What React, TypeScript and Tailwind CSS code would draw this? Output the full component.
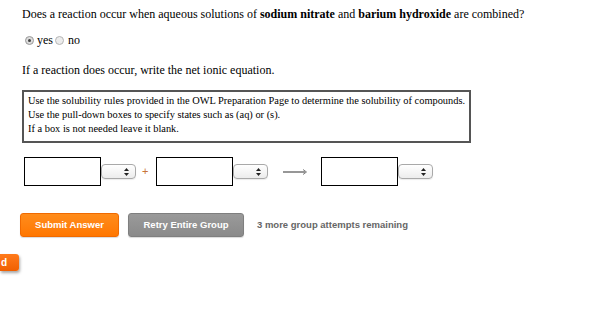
import React from "react";

function Sel() {
  return (
    <div className="relative w-[35px] h-[15px] rounded-[4px] border border-[#a9a9a9] bg-gradient-to-b from-white to-[#ececec] shadow-[0_1px_1px_rgba(0,0,0,0.08)]">
      <svg className="absolute right-[6px] top-[3px]" width="5" height="8" viewBox="0 0 5 8">
        <path d="M2.5 0 L5 3 L0 3 Z" fill="#222" />
        <path d="M0 5 L5 5 L2.5 8 Z" fill="#222" />
      </svg>
    </div>
  );
}

function Box() {
  return <div className="w-[77px] h-[29px] border border-black bg-white" />;
}

function Radio({ checked }: { checked?: boolean }) {
  return (
    <span
      className={
        "inline-flex items-center justify-center w-[9px] h-[9px] rounded-full border " +
        (checked ? "border-[#9a9a9a] bg-[#dcdcdc]" : "border-[#b5b5b5] bg-[#ececec]")
      }
    >
      {checked ? <span className="w-[3px] h-[3px] rounded-full bg-[#444]" /> : null}
    </span>
  );
}

export default function App() {
  return (
    <div className="w-[598px] h-[323px] bg-white overflow-hidden">
      <div className="pl-[22px] pt-[7px] font-['Liberation_Serif',serif] text-[12px] leading-[14px] text-black">
        <p>
          Does a reaction occur when aqueous solutions of <b>sodium nitrate</b> and{" "}
          <b>barium hydroxide</b> are combined?
        </p>
        <div className="mt-[12px] h-[14px] flex items-center pl-[3px]">
          <Radio checked />
          <span className="ml-[3px]">yes</span>
          <span className="ml-[2px] inline-flex">
            <Radio />
          </span>
          <span className="ml-[4px]">no</span>
        </div>
        <p className="mt-[16px]">If a reaction does occur, write the net ionic equation.</p>
        <div className="mt-[13px] w-[449px] h-[53px] border-2 border-[#555] pl-[4px] pt-[2px] text-[10.4px] leading-[14px]">
          <div>Use the solubility rules provided in the OWL Preparation Page to determine the solubility of compounds.</div>
          <div>Use the pull-down boxes to specify states such as (aq) or (s).</div>
          <div>If a box is not needed leave it blank.</div>
        </div>
        <div className="mt-[14px] ml-[2px] flex items-center">
          <Box />
          <Sel />
          <span className="ml-[6px] mr-[8px] text-[11px] leading-none text-[#c8743a] font-['Liberation_Sans',sans-serif]">+</span>
          <Box />
          <Sel />
          <svg className="ml-[15px] mr-[14px]" width="24" height="8" viewBox="0 0 24 8">
            <line x1="0" y1="4" x2="22" y2="4" stroke="#7d7d7d" strokeWidth="1.6" />
            <path d="M20 1.5 L23.5 4 L20 6.5" fill="none" stroke="#7d7d7d" strokeWidth="1" />
          </svg>
          <Box />
          <Sel />
        </div>
        <div className="mt-[27px] -ml-[2px] flex items-center font-['Liberation_Sans',sans-serif] font-bold text-[9.5px]">
          <div className="w-[99px] h-[24px] flex items-center justify-center rounded-[3px] border border-[#f06a00] bg-gradient-to-b from-[#ff8c1a] to-[#ff7700] text-white shadow-[0_1px_1px_rgba(0,0,0,0.15)]">
            Submit Answer
          </div>
          <div className="ml-[9px] w-[116px] h-[24px] flex items-center justify-center rounded-[3px] border border-[#7f7f7f] bg-gradient-to-b from-[#9a9a9a] to-[#8a8a8a] text-white shadow-[0_1px_1px_rgba(0,0,0,0.15)]">
            Retry Entire Group
          </div>
          <span className="ml-[13px] text-[#666]">3 more group attempts remaining</span>
        </div>
      </div>
      <div className="mt-[17px] w-[19px] h-[17px] rounded-r-[3px] bg-gradient-to-b from-[#ff7a1a] to-[#f05f00] shadow-[1px_2px_3px_rgba(0,0,0,0.35)] flex items-center pl-[1px] font-['Liberation_Sans',sans-serif] font-bold text-[10px] text-white">
        d
      </div>
    </div>
  );
}
